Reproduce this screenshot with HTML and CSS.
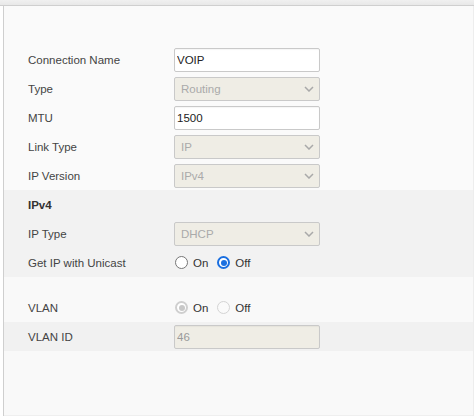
FILE: index.html
```html
<!DOCTYPE html>
<html>
<head>
<meta charset="utf-8">
<link rel="stylesheet" href="styles.css">
</head>
<body>
<div class="topbar"></div>
<div class="panel">
  <div class="section first">
    <div class="row"><label class="lbl">Connection Name</label><input class="ctl text" type="text" value="VOIP"></div>
    <div class="row"><label class="lbl">Type</label><div class="ctl select"><span>Routing</span><svg class="chev" viewBox="0 0 10 6" width="10" height="6"><path d="M1 1l4 4 4-4" fill="none" stroke="#a9a9a9" stroke-width="1.5"/></svg></div></div>
    <div class="row"><label class="lbl">MTU</label><input class="ctl text" type="text" value="1500"></div>
    <div class="row"><label class="lbl">Link Type</label><div class="ctl select"><span>IP</span><svg class="chev" viewBox="0 0 10 6" width="10" height="6"><path d="M1 1l4 4 4-4" fill="none" stroke="#a9a9a9" stroke-width="1.5"/></svg></div></div>
    <div class="row"><label class="lbl">IP Version</label><div class="ctl select"><span>IPv4</span><svg class="chev" viewBox="0 0 10 6" width="10" height="6"><path d="M1 1l4 4 4-4" fill="none" stroke="#a9a9a9" stroke-width="1.5"/></svg></div></div>
  </div>
  <div class="section band">
    <div class="row"><span class="lbl bold">IPv4</span></div>
    <div class="row"><label class="lbl">IP Type</label><div class="ctl select"><span>DHCP</span><svg class="chev" viewBox="0 0 10 6" width="10" height="6"><path d="M1 1l4 4 4-4" fill="none" stroke="#a9a9a9" stroke-width="1.5"/></svg></div></div>
    <div class="row"><label class="lbl">Get IP with Unicast</label>
      <div class="radios">
        <span class="radio"></span><span class="rtxt">On</span>
        <span class="radio checked"></span><span class="rtxt">Off</span>
      </div>
    </div>
  </div>
  <div class="section lower">
    <div class="row"><label class="lbl">VLAN</label>
      <div class="radios">
        <span class="radio dis checked"></span><span class="rtxt">On</span>
        <span class="radio dis"></span><span class="rtxt">Off</span>
      </div>
    </div>
    <div class="row shaded"><label class="lbl">VLAN ID</label><input class="ctl text disabled" type="text" value="46" disabled></div>
    <div class="filler"></div>
  </div>
</div>
</body>
</html>
```

FILE: styles.css
```css
html, body {
  margin: 0;
  padding: 0;
  background: #ffffff;
  height: 100%;
}
body {
  font-family: "Liberation Sans", Arial, sans-serif;
  font-size: 11.5px;
  color: #444;
}
.topbar {
  height: 5px;
  background: linear-gradient(#f0f0f0, #e8e8e8);
  border-bottom: 1px solid #cfcfcf;
}
.panel {
  margin-left: 3px;
  border-left: 1px solid #cfcfcf;
  border-right: 1px solid #ededed;
  height: 410px;
  background: #f9f9f9;
  display: flex;
  flex-direction: column;
}
.section.first {
  padding-top: 39px;
  background: #fafafa;
}
.section.band {
  background: #f2f2f2;
}
.section.lower {
  padding-top: 16px;
  background: #f9f9f9;
  flex: 1;
  border-bottom: 1px solid #efefef;
}
.row {
  height: 29px;
  display: flex;
  align-items: center;
}
.row.shaded {
  background: #f1f1f1;
}
.lbl {
  width: 146px;
  padding-left: 24px;
  flex: none;
}
.bold {
  font-weight: bold;
  color: #333;
}
.ctl {
  box-sizing: border-box;
  width: 146px;
  height: 24px;
  border: 1px solid #c9c9c9;
  border-radius: 2px;
  font-family: "Liberation Sans", Arial, sans-serif;
  font-size: 11.5px;
  margin: 0;
}
.text {
  background: #fff;
  color: #222;
  padding: 0 2px;
  outline: none;
  box-shadow: inset 0 1px 1px rgba(0,0,0,0.04);
}
.text.disabled {
  background: #efede5;
  color: #9a9a9a;
}
.select {
  background: #efede5;
  color: #aaaaaa;
  display: flex;
  align-items: center;
  justify-content: space-between;
  padding: 0 5px 0 6px;
}
.chev {
  display: block;
}
.radios {
  display: flex;
  align-items: center;
  padding-left: 1px;
}
.radio {
  box-sizing: border-box;
  width: 13px;
  height: 13px;
  border-radius: 50%;
  border: 1px solid #767676;
  background: #fff;
  margin-right: 5px;
  position: relative;
}
.radio.checked {
  border: 2px solid #1a6fe0;
}
.radio.checked::after {
  content: "";
  position: absolute;
  left: 1.5px;
  top: 1.5px;
  width: 6px;
  height: 6px;
  border-radius: 50%;
  background: #1a6fe0;
}
.radio.dis {
  border: 1px solid #d4d4d4;
  background: #fafafa;
}
.radio.dis.checked {
  border: 2px solid #cfcfcf;
  background: #fff;
}
.radio.dis.checked::after {
  background: #c8c8c8;
}
.rtxt {
  margin-right: 9px;
  color: #333;
}
.filler {
  flex: 1;
}
```
